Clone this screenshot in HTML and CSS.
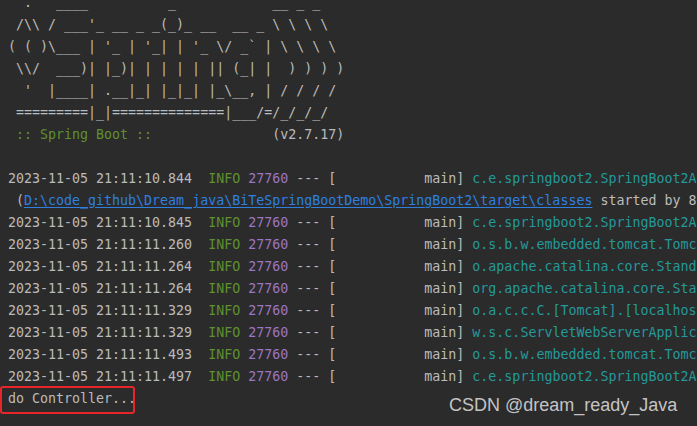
FILE: index.html
```html
<!DOCTYPE html>
<html>
<head>
<meta charset="utf-8">
<link rel="stylesheet" href="styles.css">
</head>
<body>
<div class="console">
<div class="line">  .   ____          _            __ _ _</div>
<div class="line"> /\\ / ___'_ __ _ _(_)_ __  __ _ \ \ \ \</div>
<div class="line">( ( )\___ | '_ | '_| | '_ \/ _` | \ \ \ \</div>
<div class="line"> \\/  ___)| |_)| | | | | || (_| |  ) ) ) )</div>
<div class="line">  '  |____| .__|_| |_|_| |_\__, | / / / /</div>
<div class="line"> =========|_|==============|___/=/_/_/_/</div>
<div class="line"><span class="green"> :: Spring Boot :: </span>              (v2.7.17)</div>
<div class="line"> </div>
<div class="line">2023-11-05 21:11:10.844  <span class="green">INFO</span> <span class="purple">27760</span> --- [           main] <span class="teal">c.e.springboot2.SpringBoot2A</span></div>
<div class="line"> (<span class="link">D:\code_github\Dream_java\BiTeSpringBootDemo\SpringBoot2\target\classes</span> started by 8</div>
<div class="line">2023-11-05 21:11:10.845  <span class="green">INFO</span> <span class="purple">27760</span> --- [           main] <span class="teal">c.e.springboot2.SpringBoot2A</span></div>
<div class="line">2023-11-05 21:11:11.260  <span class="green">INFO</span> <span class="purple">27760</span> --- [           main] <span class="teal">o.s.b.w.embedded.tomcat.Tomc</span></div>
<div class="line">2023-11-05 21:11:11.264  <span class="green">INFO</span> <span class="purple">27760</span> --- [           main] <span class="teal">o.apache.catalina.core.Stand</span></div>
<div class="line">2023-11-05 21:11:11.264  <span class="green">INFO</span> <span class="purple">27760</span> --- [           main] <span class="teal">org.apache.catalina.core.Sta</span></div>
<div class="line">2023-11-05 21:11:11.329  <span class="green">INFO</span> <span class="purple">27760</span> --- [           main] <span class="teal">o.a.c.c.C.[Tomcat].[localhos</span></div>
<div class="line">2023-11-05 21:11:11.329  <span class="green">INFO</span> <span class="purple">27760</span> --- [           main] <span class="teal">w.s.c.ServletWebServerApplic</span></div>
<div class="line">2023-11-05 21:11:11.493  <span class="green">INFO</span> <span class="purple">27760</span> --- [           main] <span class="teal">o.s.b.w.embedded.tomcat.Tomc</span></div>
<div class="line">2023-11-05 21:11:11.497  <span class="green">INFO</span> <span class="purple">27760</span> --- [           main] <span class="teal">c.e.springboot2.SpringBoot2A</span></div>
<div class="line">do Controller...</div>
</div>
<div class="highlight"></div>
<div class="watermark">CSDN @dream_ready_Java</div>
</body>
</html>
```
FILE: styles.css
```css
html, body {
  margin: 0;
  padding: 0;
  width: 697px;
  height: 426px;
  overflow: hidden;
  background: #2b2b2b;
}
body {
  position: relative;
}
.console {
  margin-top: -8px;
  padding-left: 8px;
  font-family: "DejaVu Sans Mono", "Liberation Mono", monospace;
  font-size: 13.3px;
  line-height: 22px;
  color: #bbbbbb;
}
.line {
  white-space: pre;
  height: 22px;
}
.green { color: #5e9030; }
.purple { color: #9b76c4; }
.teal { color: #25999a; }
.link {
  color: #2f7fe0;
  text-decoration: underline;
  text-underline-offset: 2px;
}
.highlight {
  position: absolute;
  left: 0;
  top: 386px;
  width: 131px;
  height: 24px;
  border: 2px solid #e8262a;
  border-radius: 3px;
}
.watermark {
  position: absolute;
  left: 449px;
  top: 396px;
  font-family: "Liberation Sans", Arial, sans-serif;
  font-size: 18px;
  line-height: 18px;
  color: #c4c4c4;
  white-space: nowrap;
}
```
